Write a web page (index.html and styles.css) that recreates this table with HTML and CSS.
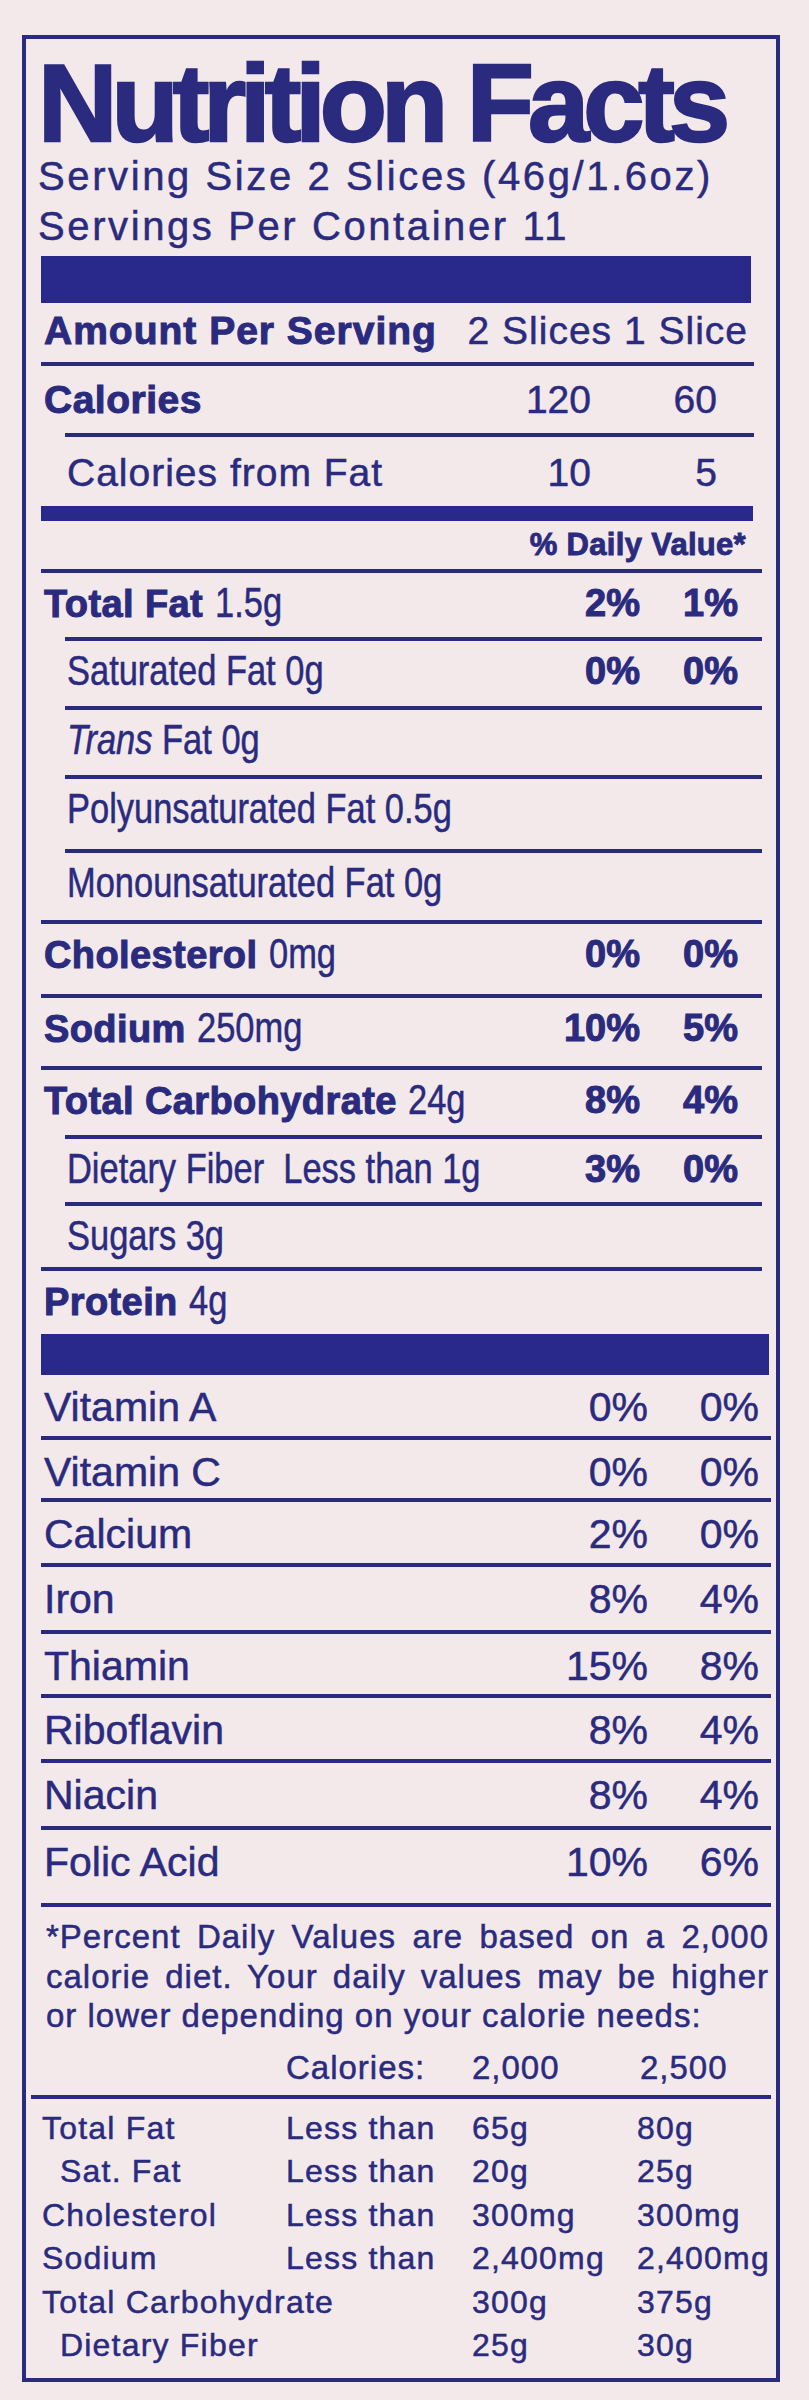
FILE: index.html
```html
<!DOCTYPE html>
<html lang="en">
<head>
<meta charset="utf-8">
<title>Nutrition Facts</title>
<link rel="stylesheet" href="styles.css">
</head>
<body>
<div class="label">
  <h1 class="title">Nutrition Facts</h1>
  <p class="serving">Serving Size 2 Slices (46g/1.6oz)</p>
  <p class="serving">Servings Per Container 11</p>
  <div class="bar bar--top"></div>

  <div class="head-row"><b>Amount Per Serving</b><span>2 Slices 1 Slice</span></div>
  <div class="cal cal--main"><b class="cal-label">Calories</b><span class="num">120</span><span class="num">60</span></div>
  <div class="cal cal--fat"><span class="cal-label">Calories from Fat</span><span class="num">10</span><span class="num">5</span></div>
  <div class="bar bar--mid"></div>
  <div class="dv-head">% Daily Value*</div>

  <div class="nut h68"><span class="nl"><b>Total Fat</b> <span class="nv">1.5g</span></span><b class="pct">2%</b><b class="pct">1%</b></div>
  <div class="nut nut--sub h69"><span class="nl"><span class="nv">Saturated Fat 0g</span></span><b class="pct">0%</b><b class="pct">0%</b></div>
  <div class="nut nut--sub h69"><span class="nl"><span class="nv"><i>Trans</i> Fat 0g</span></span></div>
  <div class="nut nut--sub h74"><span class="nl"><span class="nv">Polyunsaturated Fat 0.5g</span></span></div>
  <div class="nut nut--sub h71"><span class="nl"><span class="nv">Monounsaturated Fat 0g</span></span></div>
  <div class="nut h74"><span class="nl"><b>Cholesterol</b> <span class="nv">0mg</span></span><b class="pct">0%</b><b class="pct">0%</b></div>
  <div class="nut h72"><span class="nl"><b>Sodium</b> <span class="nv">250mg</span></span><b class="pct">10%</b><b class="pct">5%</b></div>
  <div class="nut h69"><span class="nl"><b>Total Carbohydrate</b> <span class="nv">24g</span></span><b class="pct">8%</b><b class="pct">4%</b></div>
  <div class="nut nut--sub h67"><span class="nl"><span class="nv">Dietary Fiber&nbsp; Less than 1g</span></span><b class="pct">3%</b><b class="pct">0%</b></div>
  <div class="nut nut--sub h65"><span class="nl"><span class="nv">Sugars 3g</span></span></div>
  <div class="nut h67"><span class="nl"><b>Protein</b> <span class="nv">4g</span></span></div>
  <div class="bar bar--low"></div>

  <div class="vit vit--first h61"><span>Vitamin A</span><span class="vp">0%</span><span class="vp">0%</span></div>
  <div class="vit h62"><span>Vitamin C</span><span class="vp">0%</span><span class="vp">0%</span></div>
  <div class="vit h65"><span>Calcium</span><span class="vp">2%</span><span class="vp">0%</span></div>
  <div class="vit h67"><span>Iron</span><span class="vp">8%</span><span class="vp">4%</span></div>
  <div class="vit h64"><span>Thiamin</span><span class="vp">15%</span><span class="vp">8%</span></div>
  <div class="vit h65"><span>Riboflavin</span><span class="vp">8%</span><span class="vp">4%</span></div>
  <div class="vit h67"><span>Niacin</span><span class="vp">8%</span><span class="vp">4%</span></div>
  <div class="vit h77"><span>Folic Acid</span><span class="vp">10%</span><span class="vp">6%</span></div>

  <div class="footnote">
    <span class="fn-line fn-line--just">*Percent Daily Values are based on a 2,000</span>
    <span class="fn-line fn-line--just">calorie diet. Your daily values may be higher</span>
    <span class="fn-line">or lower depending on your calorie needs:</span>
  </div>
  <div class="ref-head"><span></span><span>Calories:</span><span>2,000</span><span>2,500</span></div>

  <div class="ref-table">
    <span>Total Fat</span><span>Less than</span><span>65g</span><span>80g</span>
    <span class="ind">Sat. Fat</span><span>Less than</span><span>20g</span><span>25g</span>
    <span>Cholesterol</span><span>Less than</span><span>300mg</span><span>300mg</span>
    <span>Sodium</span><span>Less than</span><span>2,400mg</span><span>2,400mg</span>
    <span class="span2">Total Carbohydrate</span><span>300g</span><span>375g</span>
    <span class="ind span2">Dietary Fiber</span><span>25g</span><span>30g</span>
  </div>
</div>
</body>
</html>
```

FILE: styles.css
```css
* { box-sizing: border-box; }

:root {
  --ink: #2a2b7f;
  --bar: #28298a;
}

body {
  margin: 0;
  min-height: 2400px;
  background: #f3e9ea;
  color: var(--ink);
  font-family: "Liberation Sans", Arial, sans-serif;
}

.label {
  width: 758px;
  margin: 35px 0 0 22px;
  border: 4px solid var(--ink);
  padding: 16px 14px 11px 15px;
  -webkit-text-stroke: 0.5px var(--ink);
}

b { font-weight: 700; -webkit-text-stroke: 1px var(--ink); }

.title {
  margin: 0 0 0 -3px;
  height: 96px;
  font-size: 110px;
  line-height: 96px;
  font-weight: 700;
  letter-spacing: -6px;
  white-space: nowrap;
  -webkit-text-stroke: 2.4px var(--ink);
}

.serving {
  margin: 0 0 0 -3px;
  font-size: 40px;
  line-height: 50px;
  letter-spacing: 2.6px;
  white-space: nowrap;
}

.bar { background: var(--bar); }
.bar--top { margin: 5px 11px 0 0; height: 47px; }
.bar--mid { margin-right: 9px; height: 15px; }
.bar--low { margin-right: -7px; height: 41px; }

.head-row {
  display: flex;
  justify-content: space-between;
  height: 59px;
  line-height: 55px;
  font-size: 39px;
  letter-spacing: 1px;
  padding: 0 6px 0 3px;
  margin-right: 8px;
  white-space: nowrap;
}

.cal {
  display: grid;
  grid-template-columns: minmax(0, 1fr) 110px 126px;
  border-top: 4px solid var(--ink);
  font-size: 39px;
  padding: 0 37px 0 3px;
  margin-right: 8px;
  white-space: nowrap;
}
.cal--main { height: 71px; line-height: 68px; }
.cal--main .cal-label { letter-spacing: 0.5px; }
.cal--fat { height: 73px; line-height: 72px; margin-left: 24px; padding-left: 2px; }
.cal--fat .cal-label { letter-spacing: 1px; }
.num { text-align: right; }

.dv-head {
  height: 48px;
  line-height: 47px;
  font-size: 31px;
  font-weight: 700;
  -webkit-text-stroke: 0.9px var(--ink);
  letter-spacing: 0.3px;
  text-align: right;
  padding-right: 8px;
  margin-right: 8px;
}

.nut {
  display: grid;
  grid-template-columns: minmax(0, 1fr) 110px 98px;
  align-items: start;
  border-top: 4px solid var(--ink);
  line-height: 60px;
  padding: 0 24px 0 3px;
  white-space: nowrap;
}
.nut--sub { margin-left: 24px; padding-left: 2px; }

.nl { font-size: 42px; }
.nl b {
  font-size: 38px;
  letter-spacing: 0.4px;
}
.nv {
  display: inline-block;
  transform: scaleX(0.82);
  transform-origin: 0 50%;
}
.pct { font-size: 38px; text-align: right; }

.vit {
  display: grid;
  grid-template-columns: minmax(0, 1fr) 120px 111px;
  border-top: 4px solid var(--ink);
  margin-right: -9px;
  padding: 2px 12px 0 3px;
  font-size: 41px;
  line-height: 60px;
  white-space: nowrap;
}
.vit--first { border-top: 0; }
.vp { text-align: right; }

.h61 { height: 61px; }
.h62 { height: 62px; }
.h64 { height: 64px; }
.h65 { height: 65px; }
.h67 { height: 67px; }
.h68 { height: 68px; }
.h69 { height: 69px; }
.h71 { height: 71px; }
.h72 { height: 72px; }
.h74 { height: 74px; }
.h77 { height: 77px; }

.footnote {
  border-top: 4px solid var(--ink);
  margin-right: -9px;
  padding: 10px 2px 0 5px;
  font-size: 33px;
  line-height: 39.5px;
  letter-spacing: 1px;
}
.fn-line { display: block; white-space: nowrap; }
.fn-line--just { text-align: justify; text-align-last: justify; white-space: normal; }

.ref-head {
  display: grid;
  grid-template-columns: 245px 186px 168px 1fr;
  margin-top: 12px;
  height: 39.5px;
  font-size: 33px;
  line-height: 39.5px;
  letter-spacing: 1px;
  white-space: nowrap;
}

.ref-table {
  display: grid;
  grid-template-columns: 244px 186px 165px 1fr;
  margin: 8px -9px 0 -10px;
  border-top: 4px solid var(--ink);
  padding: 8px 0 0 11px;
  font-size: 32px;
  line-height: 43.4px;
  letter-spacing: 1.2px;
  white-space: nowrap;
}
.ref-table .ind { padding-left: 18px; }
.ref-table .span2 { grid-column: span 2; }
```
